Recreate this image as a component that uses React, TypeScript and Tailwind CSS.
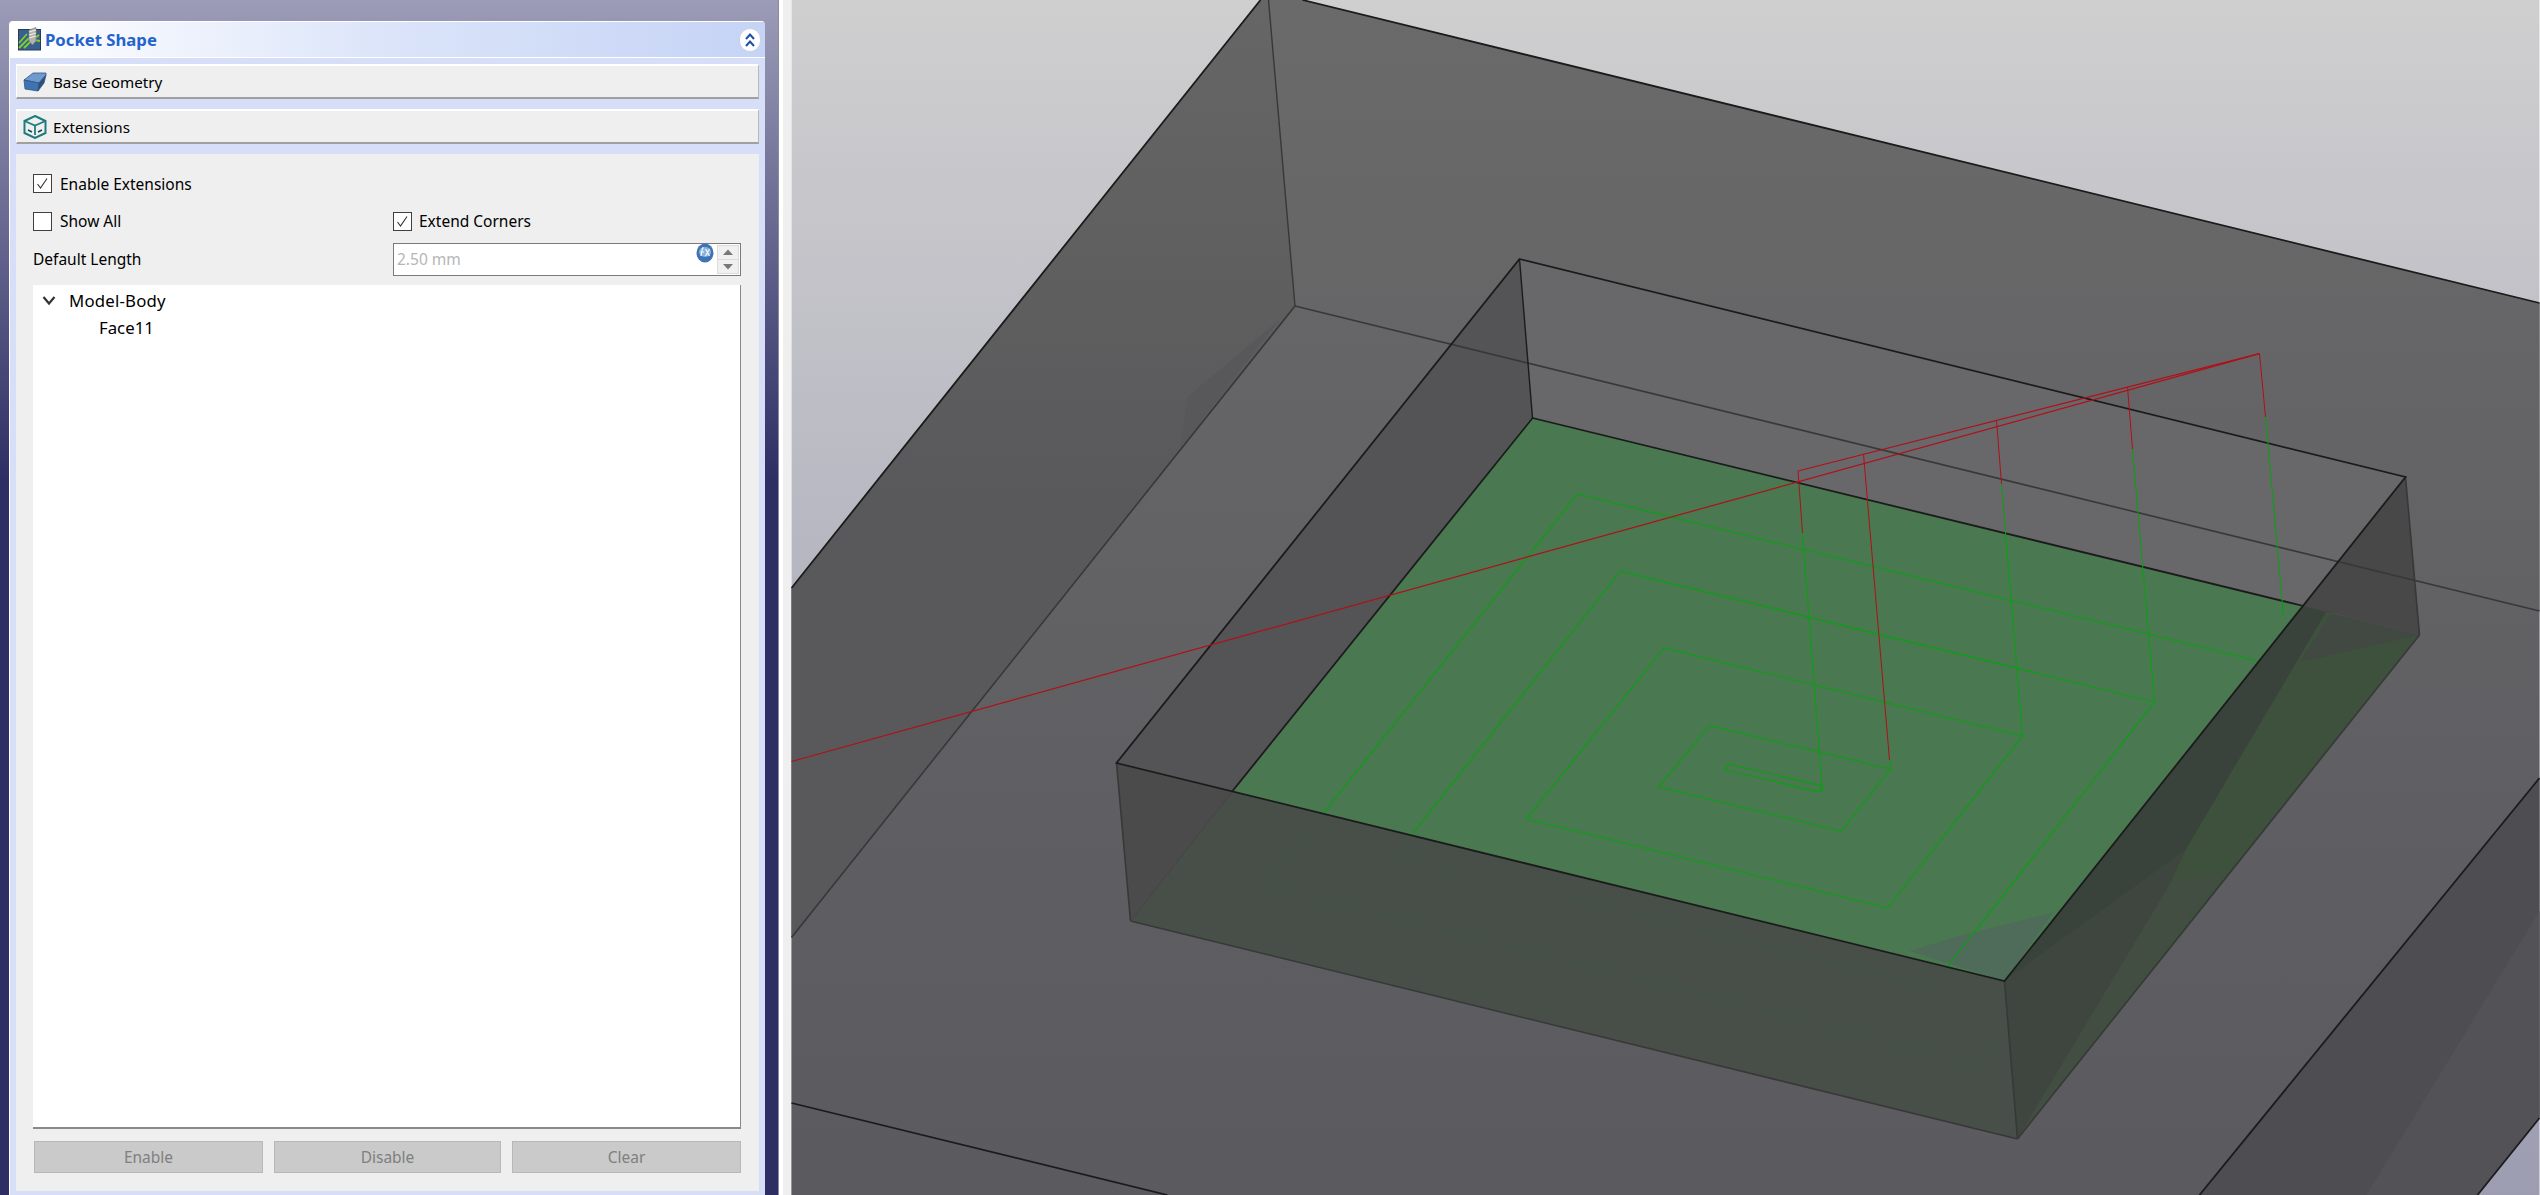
const font = "font-['Noto_Sans','Liberation_Sans',sans-serif]";

function Check({ checked }: { checked?: boolean }) {
  return (
    <div className="w-[19px] h-[19px] border border-[#3f3f3f] bg-white flex items-center justify-center">
      {checked && (
        <svg width="15" height="15" viewBox="0 0 15 15" fill="none">
          <path d="M2.5 8 L5.5 12 L12 2.5" stroke="#333" strokeWidth="1.1" />
        </svg>
      )}
    </div>
  );
}

function PocketIcon() {
  return (
    <svg width="24" height="24" viewBox="0 0 24 24">
      <rect x="0.5" y="2.5" width="22" height="20.5" fill="#38608f" stroke="#2c3c50" />
      <path d="M1 16 L9 7 M1 21 L10 12 L22 14 M6 21 L12 15 L21 8" stroke="#7fd02a" strokeWidth="1.8" fill="none" />
      <path d="M11 3 L18 0.5 L18 14 L14.5 18 L11 14 Z" fill="#b5b5ad" stroke="#7c7c76" strokeWidth="0.7" />
      <path d="M11 5 L18 3 M11 8 L18 6 M11 11 L18 9" stroke="#ececE6" strokeWidth="1.2" />
    </svg>
  );
}

function CubeIcon() {
  return (
    <svg width="24" height="20" viewBox="0 0 24 20">
      <path d="M1 8 L10 1 L23 1 L23 3 L16 11 L1 8 Z" fill="#6f9ad0" stroke="#35567f" strokeWidth="0.8" />
      <path d="M1 8 L16 11 L15 19 L2 17 Z" fill="#3f74b4" stroke="#35567f" strokeWidth="0.8" />
      <path d="M16 11 L23 3 L21 11 L15 19 Z" fill="#2b4f7f" stroke="#35567f" strokeWidth="0.8" />
    </svg>
  );
}

function HexIcon() {
  return (
    <svg width="24" height="24" viewBox="0 0 24 24" fill="none">
      <path d="M12 1 L22.5 6 L22.5 18 L12 23 L1.5 18 L1.5 6 Z" stroke="#1f7c7c" strokeWidth="2" />
      <path d="M1.5 6 L12 10.5 L22.5 6 M12 10.5 L12 20" stroke="#1f7c7c" strokeWidth="1.8" />
      <path d="M5 15 L9 17 M15 17 L19 15" stroke="#14494c" strokeWidth="1.6" />
    </svg>
  );
}

function CollapseIcon() {
  return (
    <div className="w-[22px] h-[24px] rounded-full bg-white border border-[#c9d2e8] flex items-center justify-center">
      <svg width="12" height="16" viewBox="0 0 12 16" fill="none">
        <path d="M2 7 L6 2.5 L10 7 M2 14 L6 9.5 L10 14" stroke="#1c4fa5" strokeWidth="2" />
      </svg>
    </div>
  );
}

function SectionBar({ icon, label }: { icon: React.ReactNode; label: string }) {
  return (
    <div className="h-[35px] flex items-center pl-[6px] bg-[#efefef] border-t-2 border-l border-t-white border-l-white border-b-2 border-r border-b-[#a0a0a0] border-r-[#b8b8b8]">
      <div className="w-[24px] flex justify-center shrink-0">{icon}</div>
      <span className="text-[15.2px] text-black ml-[6px] pt-[1px]">{label}</span>
    </div>
  );
}

function GreyButton({ label, width }: { label: string; width: string }) {
  return (
    <button disabled className={`${width} h-[32px] pt-[1px] bg-[#cacaca] border border-[#b8b8b8] text-[#7f7f7f] text-[15.5px]`}>
      {label}
    </button>
  );
}

function Panel() {
  return (
    <div className="w-[779px] h-full shrink-0 pl-[9px] pt-[21px] border-r border-[#8b8ba0] bg-[linear-gradient(180deg,#9c9cb8_0,#2e2e64_480px)]">
      <div className="w-[756px] h-[1174px] bg-[#d6dff7] rounded-t-[4px] overflow-hidden border-l border-white">
        <div className="h-[36px] flex items-center justify-between pl-[8px] pr-[4px] bg-[linear-gradient(90deg,#ffffff_0%,#dbe4f9_50%,#c5d3f5_100%)] border-t border-white">
          <div className="flex items-center gap-[3px]">
            <PocketIcon />
            <span className="text-[16.7px] font-bold text-[#2462cc]">Pocket Shape</span>
          </div>
          <CollapseIcon />
        </div>
        <div className="h-[1px] bg-white" />
        <div className="pl-[6px] pr-[6px] pt-[6px] flex flex-col gap-[10px]">
          <SectionBar icon={<CubeIcon />} label="Base Geometry" />
          <SectionBar icon={<HexIcon />} label="Extensions" />
          <div className="h-[1037px] bg-[#efefef] pt-[20px] pl-[17px] pr-[18px] text-[15.5px] text-black flex flex-col">
            <div className="flex items-center gap-[8px] h-[19px]">
              <Check checked />
              <span className="pt-[2px]">Enable Extensions</span>
            </div>
            <div className="grid grid-cols-[360px_1fr] mt-[17px] h-[19px]">
              <div className="flex items-center gap-[8px]">
                <Check />
                <span>Show All</span>
              </div>
              <div className="flex items-center gap-[7px]">
                <Check checked />
                <span>Extend Corners</span>
              </div>
            </div>
            <div className="grid grid-cols-[360px_1fr] mt-[14px] h-[33px] items-center">
              <span className="pt-[1px]">Default Length</span>
              <div className="relative h-[33px] bg-white border border-[#7a7a7a] flex items-center justify-between pl-[3px] pr-[1px]">
                <span className="text-[#b6b6b6] pt-[1px]">2.50 mm</span>
                <div className="w-[22px] h-[29px] bg-[#f0f0f0] border border-[#dcdcdc] flex flex-col">
                  <div className="flex-1 flex items-center justify-center border-b border-[#dcdcdc]">
                    <svg width="10" height="7" viewBox="0 0 10 7"><path d="M0 6 L5 0.5 L10 6 Z" fill="#777" /></svg>
                  </div>
                  <div className="flex-1 flex items-center justify-center">
                    <svg width="10" height="7" viewBox="0 0 10 7"><path d="M0 1 L5 6.5 L10 1 Z" fill="#777" /></svg>
                  </div>
                </div>
                <svg className="absolute right-[26px] top-[-1px]" width="18" height="20" viewBox="0 0 18 20">
                  <ellipse cx="9" cy="10" rx="8.5" ry="9.5" fill="#3e74b6" />
                  <ellipse cx="9" cy="9" rx="6" ry="5" fill="#8db2dc" />
                  <path d="M5 13 L6.5 5 L8 5 M4.5 9 L8 9 M9.5 6 L13.5 13 M13.5 6 L9.5 13" stroke="#f2f6fb" strokeWidth="1.2" fill="none" />
                </svg>
              </div>
            </div>
            <div className="mt-[9px] h-[844px] bg-white border-r border-b-2 border-[#8a8a8a] pt-[2px] text-[16.8px]">
              <div className="h-[27px] flex items-center pl-[9px]">
                <svg width="14" height="11" viewBox="0 0 14 11" fill="none">
                  <path d="M1.5 2 L7 8.5 L12.5 2" stroke="#333" strokeWidth="2.2" />
                </svg>
                <span className="ml-[13px] tracking-[0.2px]">Model-Body</span>
              </div>
              <div className="h-[27px] flex items-center pl-[66px]">Face11</div>
            </div>
            <div className="flex gap-[11px] mt-[12px] pl-[1px]">
              <GreyButton label="Enable" width="w-[229px]" />
              <GreyButton label="Disable" width="w-[227px]" />
              <GreyButton label="Clear" width="w-[229px]" />
            </div>
          </div>
        </div>
      </div>
    </div>
  );
}

const ring = (pts: number[][]) => pts.map((p) => p.join(",")).join(" ");

const spirals = [
  [[1729, 764], [1823, 786], [1820, 792], [1725.5, 770], [1729, 764]],
  [[1710, 725.5], [1891, 769], [1841.6, 831], [1659, 787], [1710, 725.5]],
  [[1664.5, 648], [2023, 736], [1888, 908], [1527, 819], [1664.5, 648]],
  [[1621, 571], [2155, 702], [1932, 987], [1397, 854], [1621, 571]],
  [[1578, 494], [2287, 668], [1977, 1063], [1266, 886], [1578, 494]],
];

// top of each ramp, where it turns from red to green, and where it lands
const ramps = [
  [1798.5, 471, 1803, 533, 1823, 792],
  [1864, 454, 1890, 760, 1891, 769],
  [1997, 420, 2002, 484, 2023, 736],
  [2128, 387, 2133, 449, 2155, 702],
  [2260, 353.6, 2266, 417, 2284, 616],
];

function Viewport() {
  return (
    <svg className="block h-full flex-1" viewBox="792 0 1748 1195">
      <defs>
        <linearGradient id="sky" gradientUnits="userSpaceOnUse" x1="0" y1="0" x2="0" y2="1195">
          <stop offset="0" stopColor="#cfcfd0" />
          <stop offset="0.42" stopColor="#b9b9c3" />
          <stop offset="1" stopColor="#9d9db2" />
        </linearGradient>
        <linearGradient id="floor" gradientUnits="userSpaceOnUse" x1="0" y1="300" x2="0" y2="1195">
          <stop offset="0" stopColor="#666668" />
          <stop offset="1" stopColor="#5a5a5f" />
        </linearGradient>
        <linearGradient id="wallL" gradientUnits="userSpaceOnUse" x1="0" y1="0" x2="0" y2="500">
          <stop offset="0" stopColor="#666666" />
          <stop offset="1" stopColor="#59595b" />
        </linearGradient>
        <linearGradient id="wallB" gradientUnits="userSpaceOnUse" x1="0" y1="0" x2="0" y2="611">
          <stop offset="0" stopColor="#6a6a6a" />
          <stop offset="1" stopColor="#626265" />
        </linearGradient>
      </defs>
      <rect x="792" y="0" width="1748" height="1195" fill="url(#sky)" />
      <polygon points="1261,0 1303,0 2540,303 2540,1118 2478,1195 792,1195 792,588" fill="url(#floor)" />
      <polygon points="1261,0 1269,0 1295.5,306 792,937.5 792,588" fill="url(#wallL)" />
      <polygon points="1280,320 1188,397 1181,447" fill="#58585a" />
      <polygon points="1269,0 1303,0 2540,303 2540,611 1295.5,306" fill="url(#wallB)" />
      <polygon points="2200,1195 2540,778 2540,1118 2478,1195" fill="#4e4e52" />
      <polygon points="2367,1195 2540,911 2540,1118 2478,1195" fill="#535357" />

      <polygon points="1520,259 2406,477 2420,635 1533,418" fill="#68686b" />
      <polygon points="1520,259 1533,418 1233,791 1117,763" fill="#545457" />
      <polygon points="1532,417 2420,635 2018,1139 1131,921" fill="#4a7850" />
      <polygon points="1910,951 1960,936 2053,913 2005,981" fill="#4f6b59" />

      {spirals.map((s, i) => (
        <polyline key={i} points={ring(s)} fill="none" stroke="#06a30e" strokeWidth="1.1" />
      ))}

      <polygon points="1117,763 1233,791 1131,921" fill="#4b4b4b" />
      <polygon points="1233,791 2005,981 2018,1139 1131,921" fill="#474c48" opacity="0.92" />
      <polygon points="2304,606 2420,635 2018,1139 2005,981" fill="#3d4f3c" opacity="0.94" />
      <polygon points="2304,606 2333,601 2186,850 2005,981" fill="#3a423c" opacity="0.94" />
      <polygon points="2005,981 2186,850 2171,883 2018,1139" fill="#404540" opacity="0.94" />
      <polygon points="2171,883 2225,873 2018,1139" fill="#434e43" />
      <polygon points="2304,606 2406,477 2420,635" fill="#484848" />
      <polygon points="2302,606 2420,635 2300,662 2333,612" fill="#424842" />

      <g fill="none" stroke="#383838" strokeWidth="1.6">
        <line x1="1295.5" y1="306" x2="2540" y2="611" />
        <line x1="1295.5" y1="306" x2="792" y2="937.5" />
        <line x1="1269" y1="0" x2="1295.5" y2="306" strokeWidth="1.4" />
        <line x1="1117" y1="763" x2="1131" y2="921" />
        <line x1="1131" y1="921" x2="2018" y2="1139" />
        <line x1="2018" y1="1139" x2="2420" y2="635" />
        <line x1="2420" y1="635" x2="2406" y2="477" />
        <line x1="2005" y1="981" x2="2018" y2="1139" />
        <line x1="1233" y1="791" x2="1131" y2="921" strokeWidth="1" stroke="#444" />
      </g>
      <g fill="none" stroke="#1b1b1b" strokeWidth="1.8">
        <line x1="1261" y1="0" x2="792" y2="588" />
        <line x1="1303" y1="0" x2="2540" y2="303" />
        <polygon points="1520,259 2406,477 2005,981 1117,763" />
        <line x1="1520" y1="259" x2="1533" y2="418" strokeWidth="1.4" />
        <line x1="1533" y1="418" x2="2304" y2="606" />
        <line x1="1533" y1="418" x2="1233" y2="791" />
        <line x1="792" y1="1103" x2="1168" y2="1195" />
        <line x1="2200" y1="1195" x2="2540" y2="778" />
        <line x1="2478" y1="1195" x2="2540" y2="1118" />
      </g>

      {ramps.map((r, i) => (
        <g key={i} strokeWidth="1">
          <line x1={r[0]} y1={r[1]} x2={r[2]} y2={r[3]} stroke="#b01018" />
          <line x1={r[2]} y1={r[3]} x2={r[4]} y2={r[5]} stroke="#06a30e" />
        </g>
      ))}
      <line x1="792" y1="761.5" x2="2260" y2="353.6" stroke="#b01018" strokeWidth="1.2" />
      <line x1="1798.5" y1="471" x2="2260" y2="353.6" stroke="#b01018" strokeWidth="1.2" />
    </svg>
  );
}

export default function App() {
  return (
    <div className={`w-[2540px] h-[1195px] flex overflow-hidden ${font}`}>
      <Panel />
      <div className="w-[4px] h-full bg-white" />
      <div className="w-[8px] h-full bg-[#efefef]" />
      <Viewport />
    </div>
  );
}
